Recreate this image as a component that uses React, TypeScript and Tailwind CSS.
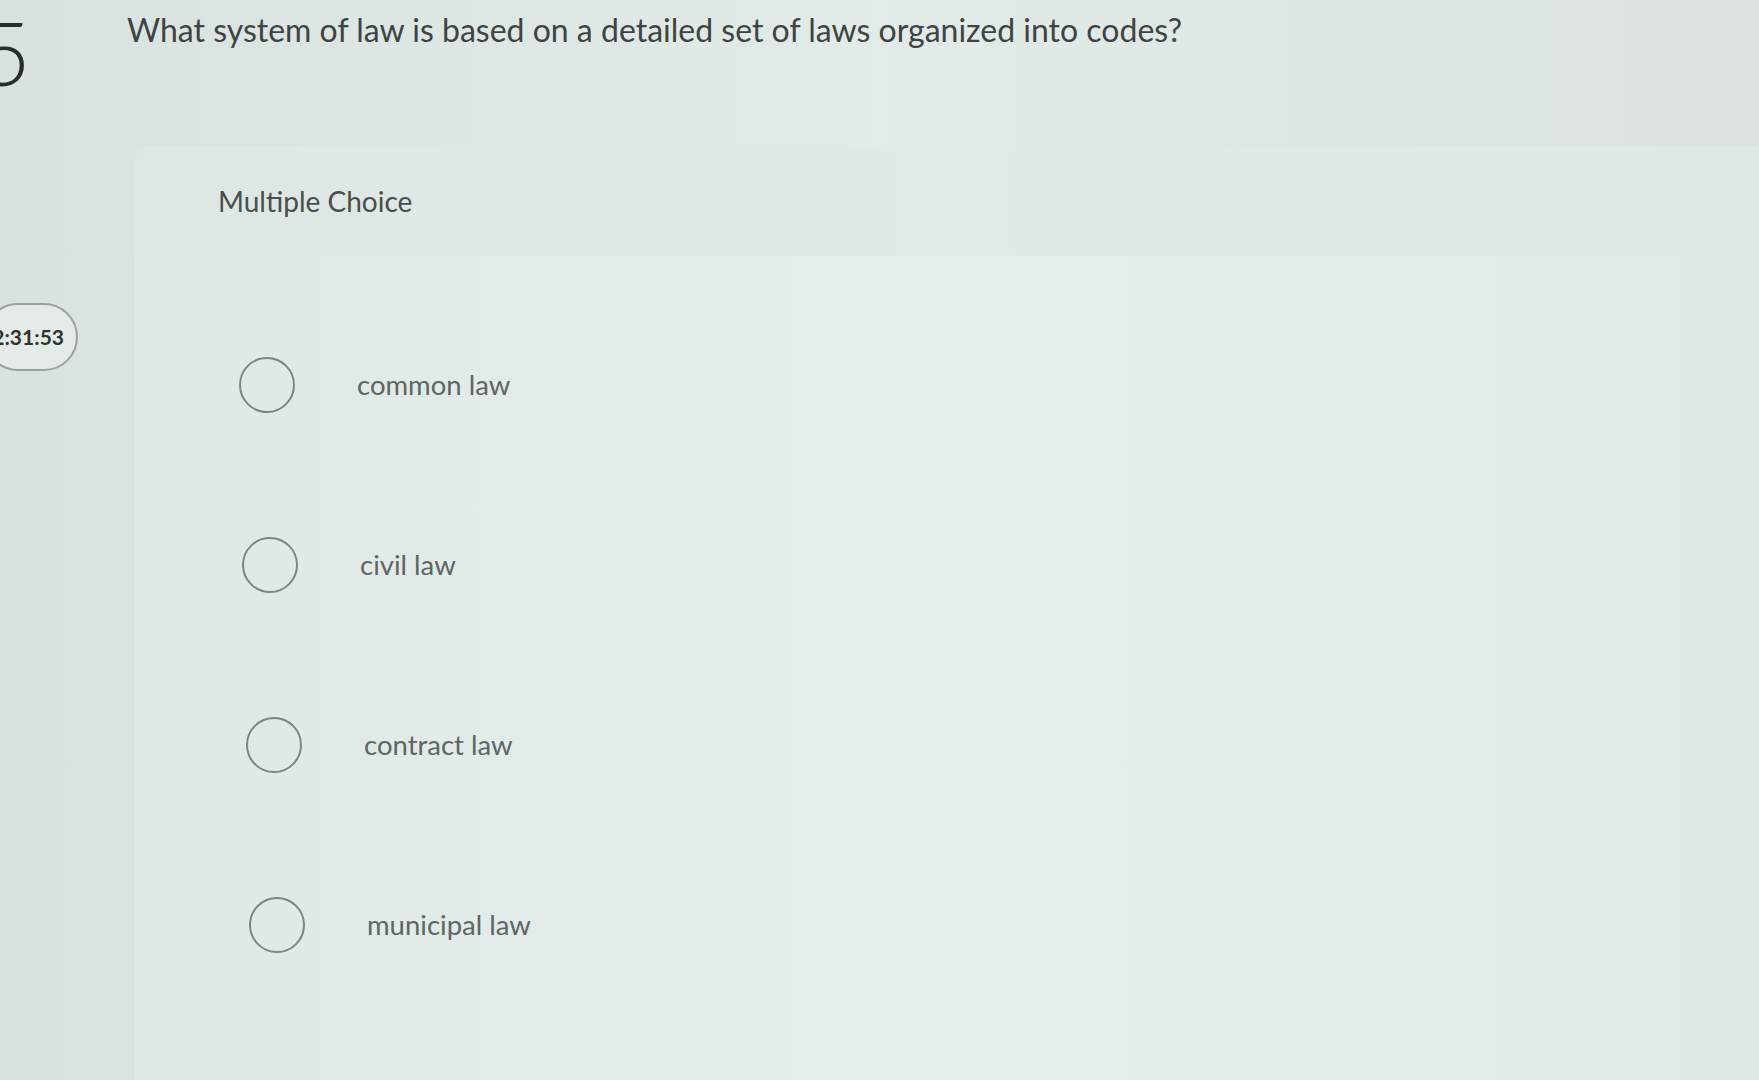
import React from 'react';

// the photo leans a little, so later rows sit slightly further right
const options = [
  { label: 'common law', shift: 'pl-0' },
  { label: 'civil law', shift: 'pl-[3px]' },
  { label: 'contract law', shift: 'pl-[7px]' },
  { label: 'municipal law', shift: 'pl-[10px]' },
];

function Radio() {
  return <span className="block h-[56px] w-[56px] shrink-0 rounded-full border-2 border-[#7d8583]" />;
}

export default function App() {
  return (
    <div
      className="flex h-[1080px] w-full overflow-hidden bg-gradient-to-r from-[#d9e2df] via-[#e2ebe8] to-[#dbe2df] text-[#3a3d3d]"
      style={{ fontFamily: 'Lato, "Open Sans", sans-serif' }}
    >
      {/* left rail: question number + timer */}
      <div className="flex w-[127px] shrink-0 flex-col">
        <div className="-ml-[20px] mt-[8px] text-[88px] font-light leading-none text-[#2a2d2d]">5</div>
        <div className="-ml-[16px] mt-[207px] flex h-[68px] w-[94px] items-center justify-end rounded-full border-2 border-[#9aa19f] bg-[#e3eae7] pr-[12px] text-[21px] font-bold text-[#2f3232]">
          2:31:53
        </div>
      </div>

      <div className="flex min-w-0 flex-1 flex-col">
        <h1 className="mt-[10px] text-[32px] font-normal leading-[40px] text-[#404343]">
          What system of law is based on a detailed set of laws organized into codes?
        </h1>

        <div className="ml-[8px] mt-[96px] flex flex-1 flex-col rounded-tl-[18px] bg-gradient-to-r from-[#dfe8e5] via-[#e6efec] to-[#e1e9e6]">
          <div className="flex h-[110px] items-center bg-[#dde6e3]/60 pl-[83px]">
            <span className="text-[28px] text-[#4a4d4d]">Multiple Choice</span>
          </div>

          <div className="mt-[101px] flex flex-col gap-[124px] pl-[104px]">
            {options.map((o) => (
              <div key={o.label} className={`flex h-[56px] items-center ${o.shift}`}>
                <Radio />
                <span className="ml-[62px] text-[27.5px] text-[#5f6464]">{o.label}</span>
              </div>
            ))}
          </div>
        </div>
      </div>
    </div>
  );
}
